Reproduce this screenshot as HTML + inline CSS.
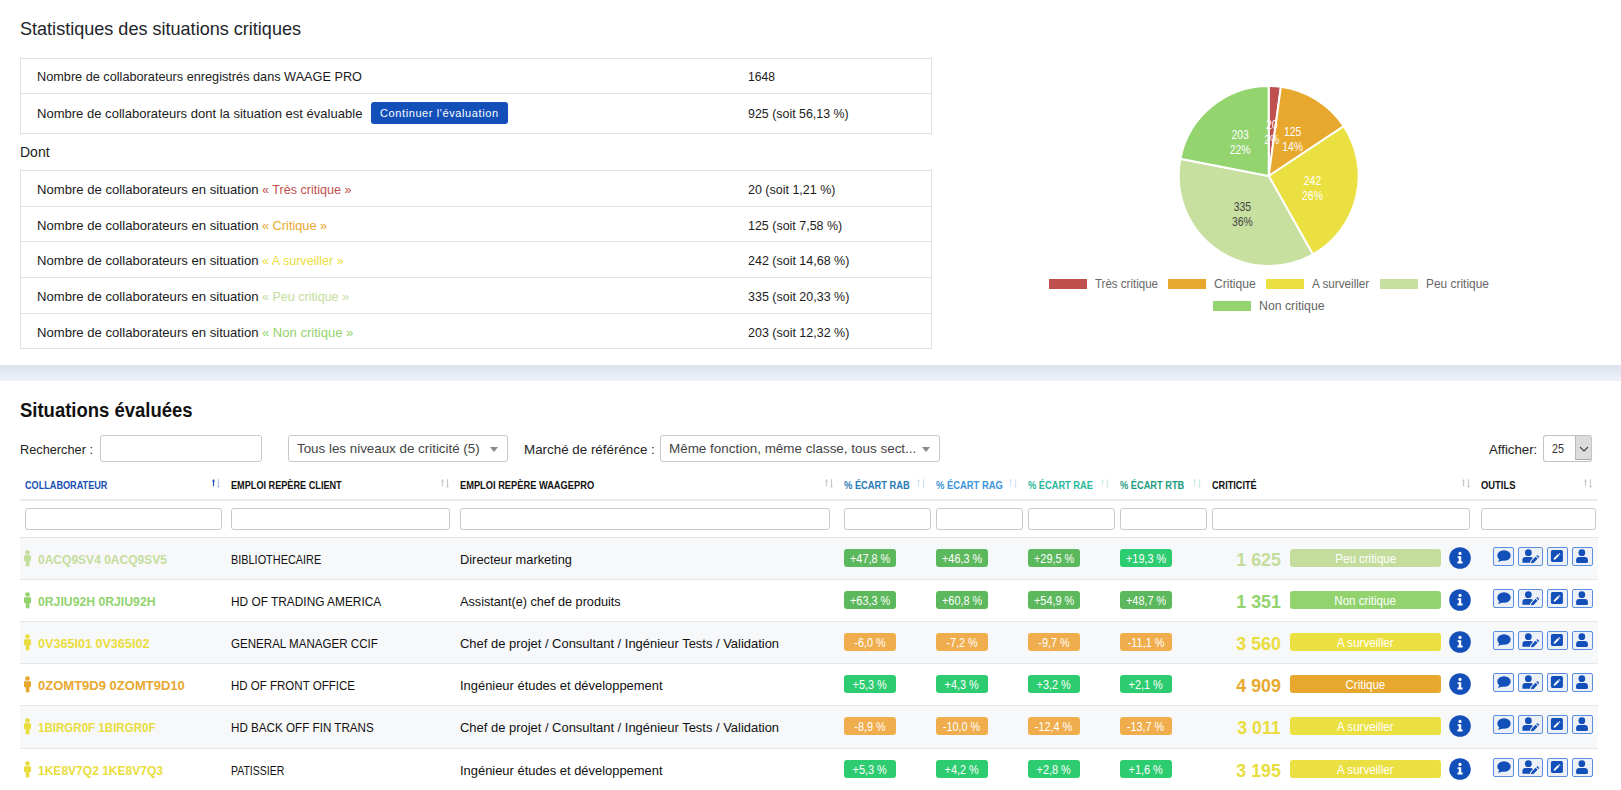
<!DOCTYPE html>
<html><head><meta charset="utf-8">
<style>
*{box-sizing:border-box;margin:0;padding:0}
html,body{width:1621px;height:790px;overflow:hidden;background:#fff}
body{font-family:"Liberation Sans",sans-serif;color:#1b1b1b;font-size:13px;position:relative}
.abs{position:absolute}
.fit{display:inline-block;transform-origin:0 50%;white-space:nowrap}
.h1{left:20px;top:18px;line-height:22px;color:#212529;white-space:nowrap}
.stbl{position:absolute;left:20px;width:912px;border:1px solid #dee2e6;border-bottom:none}
.stbl .r{position:relative;border-bottom:1px solid #dee2e6;white-space:nowrap}
.stbl .l{position:absolute;left:16px;top:1px}
.stbl .v{position:absolute;left:727px;top:1px}
.btn{height:22px;line-height:22px;padding:0 0 0 9px;white-space:nowrap;background:#134fb9;color:#fff;border-radius:3px;font-size:11px;letter-spacing:.6px}
.band{left:0;top:365px;width:1621px;height:16px;background:linear-gradient(#dce1ed,#eef1f8)}
.h2{left:20px;top:399px;line-height:22px;white-space:nowrap;color:#111}
.leg{line-height:10px;color:#666;white-space:nowrap}
.leg .fit{vertical-align:top;line-height:10px;position:relative;top:-0.5px}
.leg i{display:inline-block;width:38px;height:10px;vertical-align:top;margin-right:8px}
.lbl{line-height:18px;color:#222;white-space:nowrap}
.lbl .fit{position:relative;top:0.5px}
.inp{border:1px solid #c9c9c9;border-radius:3px;background:#fff}
.sel{height:27px;border:1px solid #c9c9c9;border-radius:3px;background:#fff;white-space:nowrap;overflow:hidden}
.sel .fit{position:absolute;left:8px;top:4px;line-height:18px;color:#444}
.sel b{position:absolute;right:9px;top:11px;width:0;height:0;border-left:4px solid transparent;border-right:4px solid transparent;border-top:5px solid #888}
.ashow{width:49px;height:26.5px;border:1px solid #c4c4c4;border-radius:3px;background:#fff;overflow:hidden;box-shadow:0 0 1px rgba(0,0,0,.15)}
.ashow span{position:absolute;left:8px;top:4px;font-size:12.4px;line-height:18px;color:#333;display:inline-block;transform:scaleX(.86);transform-origin:0 50%}
.ashow em{position:absolute;left:31px;top:0;width:17px;height:24px;background:#dcdcdc;border-left:1px solid #b8b8b8;border-right:1px solid #999;border-bottom:1px solid #aaa}
.ashow em svg{position:absolute;left:2.5px;top:10px}
table.dt{position:absolute;left:20px;top:470px;width:1578px;border-collapse:separate;border-spacing:0;table-layout:fixed}
.dt th{height:31px;font-size:10px;padding:0 0 0 5px;text-align:left;font-weight:bold;border-bottom:2px solid #ebebeb;white-space:nowrap;position:relative;vertical-align:middle;line-height:29px}
.dt th .fit{position:relative;top:1px;vertical-align:top;line-height:29px}
.dt .si{position:absolute;right:5px;top:9px}
.dt tr.flt td{height:37px;padding:0 0 0 5px;border-bottom:1px solid #e4e4e4;vertical-align:top}
.finp{margin-top:7px;height:22px;border:1px solid #c9c9c9;border-radius:3px;background:#fff}
.dt tr.dr td{padding:13px 0 0 5px;border-bottom:1px solid #e6e7e9;white-space:nowrap;vertical-align:top;line-height:18px;color:#111;overflow:hidden}
.dt tr.dr{height:42px}
.dt tr.odd td{background:#f7f8fa}
.dt tr.even td{background:#fff}
.pers{position:absolute;margin-left:-1px;margin-top:-1.5px}
.nm{margin-left:13px}
.ec{display:inline-block;width:52px;height:18px;line-height:18px;border-radius:3px;color:#fff;text-align:center;margin-top:-2px;vertical-align:top;white-space:nowrap;overflow:hidden}
.ec span{display:inline-block;transform-origin:50% 50%;position:relative;top:1px}
.ec.g{background:#5cb85c}.ec.b{background:#2ecc71}.ec.o{background:#f0ad4e}
.crit{position:relative}
.num{position:absolute;right:195px;top:11px;line-height:22px;font-weight:bold;transform-origin:100% 50%;white-space:nowrap}
.cb{position:absolute;left:83px;top:11px;width:151px;height:18px;line-height:18px;border-radius:3px;color:#fff;text-align:center}
.cb span{display:inline-block;transform-origin:50% 50%;position:relative;top:1px}
.info{position:absolute;left:242px;top:9px}
.tools{display:inline-block;margin-left:12px;margin-top:-4px;vertical-align:top;font-size:0;white-space:nowrap}
.tb{display:inline-block;height:19px;border:1px solid #5b8ee0;border-radius:2px;background:#edf1f7;vertical-align:top;position:relative}
.tb svg{position:absolute;left:0;top:0}
</style></head><body>

<div class="abs h1"><span class="fit" style="font-size:19px;transform:scaleX(0.9503);">Statistiques des situations critiques</span></div>
<div class="stbl" style="top:58px">
<div class="r" style="height:35px;line-height:34px"><span class="l"><span class="fit" style="font-size:13px;transform:scaleX(0.9771);">Nombre de collaborateurs enregistrés dans WAAGE PRO</span></span><span class="v"><span class="fit" style="font-size:13px;transform:scaleX(0.9336);">1648</span></span></div>
<div class="r" style="height:39.5px;line-height:38px"><span class="l"><span class="fit" style="font-size:13px;transform:scaleX(1.0029);">Nombre de collaborateurs dont la situation est évaluable</span></span><span class="v"><span class="fit" style="font-size:13px;transform:scaleX(0.9545);">925 (soit 56,13 %)</span></span></div>
</div>
<div class="abs btn" style="left:371px;top:102px;width:137px">Continuer l'évaluation</div>
<div class="abs" style="left:20px;top:143px;font-size:14px;line-height:18px">Dont</div>
<div class="stbl" style="top:170px">
<div class="r" style="height:36px;line-height:35px"><span class="l"><span class="fit" style="font-size:13px;transform:scaleX(1.0083);">Nombre de collaborateurs en situation</span></span><span class="l" style="left:241px;color:#c0504d"><span class="fit" style="font-size:13px;transform:scaleX(0.9674);">« Très critique »</span></span><span class="v"><span class="fit" style="font-size:13px;transform:scaleX(0.9600);">20 (soit 1,21 %)</span></span></div>
<div class="r" style="height:35px;line-height:35px"><span class="l"><span class="fit" style="font-size:13px;transform:scaleX(1.0083);">Nombre de collaborateurs en situation</span></span><span class="l" style="left:241px;color:#e8a82e"><span class="fit" style="font-size:13px;transform:scaleX(0.9793);">« Critique »</span></span><span class="v"><span class="fit" style="font-size:13px;transform:scaleX(0.9585);">125 (soit 7,58 %)</span></span></div>
<div class="r" style="height:36px;line-height:35px"><span class="l"><span class="fit" style="font-size:13px;transform:scaleX(1.0083);">Nombre de collaborateurs en situation</span></span><span class="l" style="left:241px;color:#e9dd3d"><span class="fit" style="font-size:13px;transform:scaleX(0.9654);">« A surveiller »</span></span><span class="v"><span class="fit" style="font-size:13px;transform:scaleX(0.9601);">242 (soit 14,68 %)</span></span></div>
<div class="r" style="height:36px;line-height:35px"><span class="l"><span class="fit" style="font-size:13px;transform:scaleX(1.0083);">Nombre de collaborateurs en situation</span></span><span class="l" style="left:241px;color:#c5dd9c"><span class="fit" style="font-size:13px;transform:scaleX(0.9631);">« Peu critique »</span></span><span class="v"><span class="fit" style="font-size:13px;transform:scaleX(0.9601);">335 (soit 20,33 %)</span></span></div>
<div class="r" style="height:35px;line-height:35px"><span class="l"><span class="fit" style="font-size:13px;transform:scaleX(1.0083);">Nombre de collaborateurs en situation</span></span><span class="l" style="left:241px;color:#92d36e"><span class="fit" style="font-size:13px;transform:scaleX(1.0027);">« Non critique »</span></span><span class="v"><span class="fit" style="font-size:13px;transform:scaleX(0.9601);">203 (soit 12,32 %)</span></span></div>
</div>
<svg class="abs" style="left:1100px;top:60px" width="300" height="240" viewBox="0 0 300 240">
<g stroke="#fff" stroke-width="2" stroke-linejoin="miter">
<path d="M168.7,116L168.70,26.00A90,90 0 0 1 180.89,26.83Z" fill="#c0504d"/>
<path d="M168.7,116L180.89,26.83A90,90 0 0 1 243.69,66.24Z" fill="#e8a82e"/>
<path d="M168.7,116L243.69,66.24A90,90 0 0 1 212.86,194.42Z" fill="#ebe041"/>
<path d="M168.7,116L212.86,194.42A90,90 0 0 1 80.35,98.84Z" fill="#c7df9f"/>
<path d="M168.7,116L80.35,98.84A90,90 0 0 1 168.70,26.00Z" fill="#93d46f"/>
</g>
<g font-family="Liberation Sans" font-size="12" text-anchor="middle" fill="#fff">
<text transform="translate(171.8 69) scale(.87 1)">20</text><text transform="translate(171.8 84) scale(.87 1)">2%</text>
<text transform="translate(192.6 76) scale(.87 1)">125</text><text transform="translate(192.6 91) scale(.87 1)">14%</text>
<text transform="translate(212.5 124.5) scale(.87 1)">242</text><text transform="translate(212.5 139.5) scale(.87 1)">26%</text>
<text transform="translate(142.4 150.5) scale(.87 1)" fill="#444">335</text><text transform="translate(142.4 165.5) scale(.87 1)" fill="#444">36%</text>
<text transform="translate(140.1 79.3) scale(.87 1)">203</text><text transform="translate(140.1 94.3) scale(.87 1)">22%</text>
</g>
</svg>

<div class="abs leg" style="left:1049px;top:279px"><i style="background:#c0504d"></i><span class="fit" style="font-size:12.6px;transform:scaleX(0.9155);">Très critique</span></div>
<div class="abs leg" style="left:1168px;top:279px"><i style="background:#e8a82e"></i><span class="fit" style="font-size:12.6px;transform:scaleX(0.9632);">Critique</span></div>
<div class="abs leg" style="left:1266px;top:279px"><i style="background:#ebe041"></i><span class="fit" style="font-size:12.6px;transform:scaleX(0.9296);">A surveiller</span></div>
<div class="abs leg" style="left:1380px;top:279px"><i style="background:#c7df9f"></i><span class="fit" style="font-size:12.6px;transform:scaleX(0.9458);">Peu critique</span></div>
<div class="abs leg" style="left:1213px;top:301px"><i style="background:#93d46f"></i><span class="fit" style="font-size:12.6px;transform:scaleX(0.9762);">Non critique</span></div>
<div class="abs band"></div>
<div class="abs h2"><span class="fit" style="font-size:20px;font-weight:bold;transform:scaleX(0.9238);">Situations évaluées</span></div>
<div class="abs lbl" style="left:20px;top:440px"><span class="fit" style="font-size:13.5px;transform:scaleX(0.9446);">Rechercher :</span></div>
<div class="abs inp" style="left:100px;top:435px;width:162px;height:27px"></div>
<div class="abs sel" style="left:288px;top:435px;width:220px"><span class="fit" style="font-size:13.5px;transform:scaleX(0.9898);">Tous les niveaux de criticité (5)</span><b></b></div>
<div class="abs lbl" style="left:524px;top:440px"><span class="fit" style="font-size:13.5px;transform:scaleX(0.9904);">Marché de référénce :</span></div>
<div class="abs sel" style="left:660px;top:435px;width:280px"><span class="fit" style="font-size:13.5px;transform:scaleX(0.9958);">Même fonction, même classe, tous sect...</span><b></b></div>
<div class="abs lbl" style="left:1489px;top:440px"><span class="fit" style="font-size:13.5px;transform:scaleX(0.9782);">Afficher:</span></div>
<div class="abs ashow" style="left:1543px;top:435px"><span>25</span><em><svg width="10" height="6" viewBox="0 0 10 6"><path d="M1 1L5 5L9 1" fill="none" stroke="#444" stroke-width="1.1"/></svg></em></div>
<table class="dt"><colgroup><col style="width:206px"><col style="width:229px"><col style="width:384px"><col style="width:92px"><col style="width:92px"><col style="width:92px"><col style="width:92px"><col style="width:269px"><col style="width:122px"></colgroup>
<tr class="hd"><th style="color:#1a4fb5"><span class="fit" style="font-size:10px;font-weight:bold;transform:scaleX(0.9119);">COLLABORATEUR</span><svg class="si" width="10" height="10" viewBox="0 0 10 10"><path d="M2.5 7.2V0.6" fill="none" stroke="#1a4fb5" stroke-width="1.15"/><path d="M1 2.5L2.5 0.2L4 2.5Z" fill="#1a4fb5"/><path d="M7.5 0.2V8" fill="none" stroke="#b3c7ea" stroke-width="1.15"/><path d="M5.9 7.1L7.5 9.1L9.1 7.1Z" fill="#b3c7ea"/></svg></th><th style="color:#111"><span class="fit" style="font-size:10px;font-weight:bold;transform:scaleX(0.9139);">EMPLOI REPÈRE CLIENT</span><svg class="si" width="10" height="10" viewBox="0 0 10 10"><path d="M2.5 7.2V0.6" fill="none" stroke="#c8c8c8" stroke-width="1.15"/><path d="M1 2.5L2.5 0.2L4 2.5Z" fill="#c8c8c8"/><path d="M7.5 0.2V8" fill="none" stroke="#c8c8c8" stroke-width="1.15"/><path d="M5.9 7.1L7.5 9.1L9.1 7.1Z" fill="#c8c8c8"/></svg></th><th style="color:#111"><span class="fit" style="font-size:10px;font-weight:bold;transform:scaleX(0.9283);">EMPLOI REPÈRE WAAGEPRO</span><svg class="si" width="10" height="10" viewBox="0 0 10 10"><path d="M2.5 7.2V0.6" fill="none" stroke="#c8c8c8" stroke-width="1.15"/><path d="M1 2.5L2.5 0.2L4 2.5Z" fill="#c8c8c8"/><path d="M7.5 0.2V8" fill="none" stroke="#c8c8c8" stroke-width="1.15"/><path d="M5.9 7.1L7.5 9.1L9.1 7.1Z" fill="#c8c8c8"/></svg></th><th style="color:#2a7ab8"><span class="fit" style="font-size:10px;font-weight:bold;transform:scaleX(0.9326);">% ÉCART RAB</span><svg class="si" width="10" height="10" viewBox="0 0 10 10"><path d="M2.5 7.2V0.6" fill="none" stroke="#cfe0ef" stroke-width="1.15"/><path d="M1 2.5L2.5 0.2L4 2.5Z" fill="#cfe0ef"/><path d="M7.5 0.2V8" fill="none" stroke="#cfe0ef" stroke-width="1.15"/><path d="M5.9 7.1L7.5 9.1L9.1 7.1Z" fill="#cfe0ef"/></svg></th><th style="color:#3d94dc"><span class="fit" style="font-size:10px;font-weight:bold;transform:scaleX(0.9393);">% ÉCART RAG</span><svg class="si" width="10" height="10" viewBox="0 0 10 10"><path d="M2.5 7.2V0.6" fill="none" stroke="#d3e5f5" stroke-width="1.15"/><path d="M1 2.5L2.5 0.2L4 2.5Z" fill="#d3e5f5"/><path d="M7.5 0.2V8" fill="none" stroke="#d3e5f5" stroke-width="1.15"/><path d="M5.9 7.1L7.5 9.1L9.1 7.1Z" fill="#d3e5f5"/></svg></th><th style="color:#26b799"><span class="fit" style="font-size:10px;font-weight:bold;transform:scaleX(0.9271);">% ÉCART RAE</span><svg class="si" width="10" height="10" viewBox="0 0 10 10"><path d="M2.5 7.2V0.6" fill="none" stroke="#cdeee6" stroke-width="1.15"/><path d="M1 2.5L2.5 0.2L4 2.5Z" fill="#cdeee6"/><path d="M7.5 0.2V8" fill="none" stroke="#cdeee6" stroke-width="1.15"/><path d="M5.9 7.1L7.5 9.1L9.1 7.1Z" fill="#cdeee6"/></svg></th><th style="color:#1c9b82"><span class="fit" style="font-size:10px;font-weight:bold;transform:scaleX(0.9245);">% ÉCART RTB</span><svg class="si" width="10" height="10" viewBox="0 0 10 10"><path d="M2.5 7.2V0.6" fill="none" stroke="#cdeee6" stroke-width="1.15"/><path d="M1 2.5L2.5 0.2L4 2.5Z" fill="#cdeee6"/><path d="M7.5 0.2V8" fill="none" stroke="#cdeee6" stroke-width="1.15"/><path d="M5.9 7.1L7.5 9.1L9.1 7.1Z" fill="#cdeee6"/></svg></th><th style="color:#111"><span class="fit" style="font-size:10px;font-weight:bold;transform:scaleX(0.9144);">CRITICITÉ</span><svg class="si" width="10" height="10" viewBox="0 0 10 10"><path d="M2.5 7.2V0.6" fill="none" stroke="#c8c8c8" stroke-width="1.15"/><path d="M1 2.5L2.5 0.2L4 2.5Z" fill="#c8c8c8"/><path d="M7.5 0.2V8" fill="none" stroke="#c8c8c8" stroke-width="1.15"/><path d="M5.9 7.1L7.5 9.1L9.1 7.1Z" fill="#c8c8c8"/></svg></th><th style="color:#111"><span class="fit" style="font-size:10px;font-weight:bold;transform:scaleX(0.9382);">OUTILS</span><svg class="si" width="10" height="10" viewBox="0 0 10 10"><path d="M2.5 7.2V0.6" fill="none" stroke="#c8c8c8" stroke-width="1.15"/><path d="M1 2.5L2.5 0.2L4 2.5Z" fill="#c8c8c8"/><path d="M7.5 0.2V8" fill="none" stroke="#c8c8c8" stroke-width="1.15"/><path d="M5.9 7.1L7.5 9.1L9.1 7.1Z" fill="#c8c8c8"/></svg></th></tr>
<tr class="flt"><td><div class="finp" style="width:197px"></div></td><td><div class="finp" style="width:219px"></div></td><td><div class="finp" style="width:370px"></div></td><td><div class="finp" style="width:87px"></div></td><td><div class="finp" style="width:87px"></div></td><td><div class="finp" style="width:87px"></div></td><td><div class="finp" style="width:87px"></div></td><td><div class="finp" style="width:258px"></div></td><td><div class="finp" style="width:115px"></div></td></tr>
<tr class="dr odd"><td><svg class="pers" width="8" height="17" viewBox="0 0 8 17"><circle cx="3.5" cy="2.5" r="2.35" fill="#c5dd9c"/><rect x="0" y="5.2" width="7" height="6" rx="0.9" fill="#c5dd9c"/><rect x="1.8" y="10.5" width="3.6" height="5.8" fill="#c5dd9c"/></svg><span class="fit nm" style="font-size:13px;font-weight:bold;transform:scaleX(0.9251);color:#c5dd9c">0ACQ9SV4 0ACQ9SV5</span></td><td><span class="fit" style="font-size:13px;transform:scaleX(0.8380);">BIBLIOTHECAIRE</span></td><td><span class="fit" style="font-size:13px;transform:scaleX(0.9865);">Directeur marketing</span></td><td><span class="ec g"><span style="font-size:12.5px;transform:scaleX(0.87)">+47,8 %</span></span></td><td><span class="ec g"><span style="font-size:12.5px;transform:scaleX(0.87)">+46,3 %</span></span></td><td><span class="ec g"><span style="font-size:12.5px;transform:scaleX(0.87)">+29,5 %</span></span></td><td><span class="ec b"><span style="font-size:12.5px;transform:scaleX(0.87)">+19,3 %</span></span></td><td class="crit"><b class="num" style="color:#c5dd9c;font-size:18.7px;transform:scaleX(0.95)">1 625</b><span class="cb" style="background:#c5dd9c"><span style="font-size:12.4px;transform:scaleX(0.93)">Peu critique</span></span><svg class="info" width="22" height="22" viewBox="0 0 22 22"><circle cx="11" cy="11" r="10.8" fill="#134fb9"/><circle cx="11" cy="6.4" r="1.6" fill="#fff"/><path d="M8.6 9.2H12.2V14.6H13.6V16.4H8.5V14.6H9.8V11H8.6Z" fill="#fff"/></svg></td><td><span class="tools"><i class="tb" style="width:21px"><svg width="19" height="17" viewBox="0 0 19 17"><ellipse cx="10" cy="7.55" rx="6.7" ry="5.3" fill="#134fb9"/><path d="M5.6 10.4L4 14L9 12.3Z" fill="#134fb9"/></svg></i><i class="tb" style="width:25px;margin-left:4px"><svg width="23" height="17" viewBox="0 0 23 17"><circle cx="9.35" cy="4.7" r="3.4" fill="#134fb9"/><path d="M3.4 14.8V12Q3.4 9 6.4 9H11.4Q13.1 9 14 10.1L11.4 12.7L11 14.8Z" fill="#134fb9"/><path d="M12 15.2L12.5 12.9L16.6 8.8L18.6 10.8L14.5 14.9Z" fill="#134fb9"/><path d="M17.3 8.1L18.3 7.1L20.3 9.1L19.3 10.1Z" fill="#134fb9"/></svg></i><i class="tb" style="width:21px;margin-left:4px"><svg width="19" height="17" viewBox="0 0 19 17"><rect x="2.9" y="2.1" width="12" height="11.8" rx="1.6" fill="#134fb9"/><path d="M5.6 11.1Q5.7 10.3 6.3 9.7L9.9 6.1L11.3 7.5L7.7 11.1Q7.1 11.7 6.3 11.8Q5.5 11.8 5.6 11.1Z" fill="#fff"/><path d="M10.5 5.5L11.1 4.9L12.5 6.3L11.9 6.9Z" fill="#fff"/></svg></i><i class="tb" style="width:21px;margin-left:4px"><svg width="19" height="17" viewBox="0 0 19 17"><circle cx="8.85" cy="4.65" r="3.35" fill="#134fb9"/><path d="M3.1 13.4V12.2Q3.1 9 6.3 9H11.7Q14.9 9 14.9 12.2V13.4Q14.9 14.9 13.4 14.9H4.6Q3.1 14.9 3.1 13.4Z" fill="#134fb9"/></svg></i></span></td></tr>
<tr class="dr even"><td><svg class="pers" width="8" height="17" viewBox="0 0 8 17"><circle cx="3.5" cy="2.5" r="2.35" fill="#92d36e"/><rect x="0" y="5.2" width="7" height="6" rx="0.9" fill="#92d36e"/><rect x="1.8" y="10.5" width="3.6" height="5.8" fill="#92d36e"/></svg><span class="fit nm" style="font-size:13px;font-weight:bold;transform:scaleX(0.9400);color:#92d36e">0RJIU92H 0RJIU92H</span></td><td><span class="fit" style="font-size:13px;transform:scaleX(0.9136);">HD OF TRADING AMERICA</span></td><td><span class="fit" style="font-size:13px;transform:scaleX(0.9754);">Assistant(e) chef de produits</span></td><td><span class="ec g"><span style="font-size:12.5px;transform:scaleX(0.87)">+63,3 %</span></span></td><td><span class="ec g"><span style="font-size:12.5px;transform:scaleX(0.87)">+60,8 %</span></span></td><td><span class="ec g"><span style="font-size:12.5px;transform:scaleX(0.87)">+54,9 %</span></span></td><td><span class="ec g"><span style="font-size:12.5px;transform:scaleX(0.87)">+48,7 %</span></span></td><td class="crit"><b class="num" style="color:#92d36e;font-size:18.7px;transform:scaleX(0.95)">1 351</b><span class="cb" style="background:#92d36e"><span style="font-size:12.4px;transform:scaleX(0.93)">Non critique</span></span><svg class="info" width="22" height="22" viewBox="0 0 22 22"><circle cx="11" cy="11" r="10.8" fill="#134fb9"/><circle cx="11" cy="6.4" r="1.6" fill="#fff"/><path d="M8.6 9.2H12.2V14.6H13.6V16.4H8.5V14.6H9.8V11H8.6Z" fill="#fff"/></svg></td><td><span class="tools"><i class="tb" style="width:21px"><svg width="19" height="17" viewBox="0 0 19 17"><ellipse cx="10" cy="7.55" rx="6.7" ry="5.3" fill="#134fb9"/><path d="M5.6 10.4L4 14L9 12.3Z" fill="#134fb9"/></svg></i><i class="tb" style="width:25px;margin-left:4px"><svg width="23" height="17" viewBox="0 0 23 17"><circle cx="9.35" cy="4.7" r="3.4" fill="#134fb9"/><path d="M3.4 14.8V12Q3.4 9 6.4 9H11.4Q13.1 9 14 10.1L11.4 12.7L11 14.8Z" fill="#134fb9"/><path d="M12 15.2L12.5 12.9L16.6 8.8L18.6 10.8L14.5 14.9Z" fill="#134fb9"/><path d="M17.3 8.1L18.3 7.1L20.3 9.1L19.3 10.1Z" fill="#134fb9"/></svg></i><i class="tb" style="width:21px;margin-left:4px"><svg width="19" height="17" viewBox="0 0 19 17"><rect x="2.9" y="2.1" width="12" height="11.8" rx="1.6" fill="#134fb9"/><path d="M5.6 11.1Q5.7 10.3 6.3 9.7L9.9 6.1L11.3 7.5L7.7 11.1Q7.1 11.7 6.3 11.8Q5.5 11.8 5.6 11.1Z" fill="#fff"/><path d="M10.5 5.5L11.1 4.9L12.5 6.3L11.9 6.9Z" fill="#fff"/></svg></i><i class="tb" style="width:21px;margin-left:4px"><svg width="19" height="17" viewBox="0 0 19 17"><circle cx="8.85" cy="4.65" r="3.35" fill="#134fb9"/><path d="M3.1 13.4V12.2Q3.1 9 6.3 9H11.7Q14.9 9 14.9 12.2V13.4Q14.9 14.9 13.4 14.9H4.6Q3.1 14.9 3.1 13.4Z" fill="#134fb9"/></svg></i></span></td></tr>
<tr class="dr odd"><td><svg class="pers" width="8" height="17" viewBox="0 0 8 17"><circle cx="3.5" cy="2.5" r="2.35" fill="#e9dd3d"/><rect x="0" y="5.2" width="7" height="6" rx="0.9" fill="#e9dd3d"/><rect x="1.8" y="10.5" width="3.6" height="5.8" fill="#e9dd3d"/></svg><span class="fit nm" style="font-size:13px;font-weight:bold;transform:scaleX(0.9692);color:#e9dd3d">0V365I01 0V365I02</span></td><td><span class="fit" style="font-size:13px;transform:scaleX(0.8899);">GENERAL MANAGER CCIF</span></td><td><span class="fit" style="font-size:13px;transform:scaleX(0.9959);">Chef de projet / Consultant / Ingénieur Tests / Validation</span></td><td><span class="ec o"><span style="font-size:12.5px;transform:scaleX(0.87)">-6,0 %</span></span></td><td><span class="ec o"><span style="font-size:12.5px;transform:scaleX(0.87)">-7,2 %</span></span></td><td><span class="ec o"><span style="font-size:12.5px;transform:scaleX(0.87)">-9,7 %</span></span></td><td><span class="ec o"><span style="font-size:12.5px;transform:scaleX(0.87)">-11,1 %</span></span></td><td class="crit"><b class="num" style="color:#e9dd3d;font-size:18.7px;transform:scaleX(0.95)">3 560</b><span class="cb" style="background:#ebe041"><span style="font-size:12.4px;transform:scaleX(0.93)">A surveiller</span></span><svg class="info" width="22" height="22" viewBox="0 0 22 22"><circle cx="11" cy="11" r="10.8" fill="#134fb9"/><circle cx="11" cy="6.4" r="1.6" fill="#fff"/><path d="M8.6 9.2H12.2V14.6H13.6V16.4H8.5V14.6H9.8V11H8.6Z" fill="#fff"/></svg></td><td><span class="tools"><i class="tb" style="width:21px"><svg width="19" height="17" viewBox="0 0 19 17"><ellipse cx="10" cy="7.55" rx="6.7" ry="5.3" fill="#134fb9"/><path d="M5.6 10.4L4 14L9 12.3Z" fill="#134fb9"/></svg></i><i class="tb" style="width:25px;margin-left:4px"><svg width="23" height="17" viewBox="0 0 23 17"><circle cx="9.35" cy="4.7" r="3.4" fill="#134fb9"/><path d="M3.4 14.8V12Q3.4 9 6.4 9H11.4Q13.1 9 14 10.1L11.4 12.7L11 14.8Z" fill="#134fb9"/><path d="M12 15.2L12.5 12.9L16.6 8.8L18.6 10.8L14.5 14.9Z" fill="#134fb9"/><path d="M17.3 8.1L18.3 7.1L20.3 9.1L19.3 10.1Z" fill="#134fb9"/></svg></i><i class="tb" style="width:21px;margin-left:4px"><svg width="19" height="17" viewBox="0 0 19 17"><rect x="2.9" y="2.1" width="12" height="11.8" rx="1.6" fill="#134fb9"/><path d="M5.6 11.1Q5.7 10.3 6.3 9.7L9.9 6.1L11.3 7.5L7.7 11.1Q7.1 11.7 6.3 11.8Q5.5 11.8 5.6 11.1Z" fill="#fff"/><path d="M10.5 5.5L11.1 4.9L12.5 6.3L11.9 6.9Z" fill="#fff"/></svg></i><i class="tb" style="width:21px;margin-left:4px"><svg width="19" height="17" viewBox="0 0 19 17"><circle cx="8.85" cy="4.65" r="3.35" fill="#134fb9"/><path d="M3.1 13.4V12.2Q3.1 9 6.3 9H11.7Q14.9 9 14.9 12.2V13.4Q14.9 14.9 13.4 14.9H4.6Q3.1 14.9 3.1 13.4Z" fill="#134fb9"/></svg></i></span></td></tr>
<tr class="dr even"><td><svg class="pers" width="8" height="17" viewBox="0 0 8 17"><circle cx="3.5" cy="2.5" r="2.35" fill="#e8a82e"/><rect x="0" y="5.2" width="7" height="6" rx="0.9" fill="#e8a82e"/><rect x="1.8" y="10.5" width="3.6" height="5.8" fill="#e8a82e"/></svg><span class="fit nm" style="font-size:13px;font-weight:bold;transform:scaleX(1.0011);color:#e8a82e">0ZOMT9D9 0ZOMT9D10</span></td><td><span class="fit" style="font-size:13px;transform:scaleX(0.8858);">HD OF FRONT OFFICE</span></td><td><span class="fit" style="font-size:13px;transform:scaleX(0.9935);">Ingénieur études et développement</span></td><td><span class="ec b"><span style="font-size:12.5px;transform:scaleX(0.87)">+5,3 %</span></span></td><td><span class="ec b"><span style="font-size:12.5px;transform:scaleX(0.87)">+4,3 %</span></span></td><td><span class="ec b"><span style="font-size:12.5px;transform:scaleX(0.87)">+3,2 %</span></span></td><td><span class="ec b"><span style="font-size:12.5px;transform:scaleX(0.87)">+2,1 %</span></span></td><td class="crit"><b class="num" style="color:#e8a82e;font-size:18.7px;transform:scaleX(0.95)">4 909</b><span class="cb" style="background:#e8a82e"><span style="font-size:12.4px;transform:scaleX(0.93)">Critique</span></span><svg class="info" width="22" height="22" viewBox="0 0 22 22"><circle cx="11" cy="11" r="10.8" fill="#134fb9"/><circle cx="11" cy="6.4" r="1.6" fill="#fff"/><path d="M8.6 9.2H12.2V14.6H13.6V16.4H8.5V14.6H9.8V11H8.6Z" fill="#fff"/></svg></td><td><span class="tools"><i class="tb" style="width:21px"><svg width="19" height="17" viewBox="0 0 19 17"><ellipse cx="10" cy="7.55" rx="6.7" ry="5.3" fill="#134fb9"/><path d="M5.6 10.4L4 14L9 12.3Z" fill="#134fb9"/></svg></i><i class="tb" style="width:25px;margin-left:4px"><svg width="23" height="17" viewBox="0 0 23 17"><circle cx="9.35" cy="4.7" r="3.4" fill="#134fb9"/><path d="M3.4 14.8V12Q3.4 9 6.4 9H11.4Q13.1 9 14 10.1L11.4 12.7L11 14.8Z" fill="#134fb9"/><path d="M12 15.2L12.5 12.9L16.6 8.8L18.6 10.8L14.5 14.9Z" fill="#134fb9"/><path d="M17.3 8.1L18.3 7.1L20.3 9.1L19.3 10.1Z" fill="#134fb9"/></svg></i><i class="tb" style="width:21px;margin-left:4px"><svg width="19" height="17" viewBox="0 0 19 17"><rect x="2.9" y="2.1" width="12" height="11.8" rx="1.6" fill="#134fb9"/><path d="M5.6 11.1Q5.7 10.3 6.3 9.7L9.9 6.1L11.3 7.5L7.7 11.1Q7.1 11.7 6.3 11.8Q5.5 11.8 5.6 11.1Z" fill="#fff"/><path d="M10.5 5.5L11.1 4.9L12.5 6.3L11.9 6.9Z" fill="#fff"/></svg></i><i class="tb" style="width:21px;margin-left:4px"><svg width="19" height="17" viewBox="0 0 19 17"><circle cx="8.85" cy="4.65" r="3.35" fill="#134fb9"/><path d="M3.1 13.4V12.2Q3.1 9 6.3 9H11.7Q14.9 9 14.9 12.2V13.4Q14.9 14.9 13.4 14.9H4.6Q3.1 14.9 3.1 13.4Z" fill="#134fb9"/></svg></i></span></td></tr>
<tr class="dr odd" style="height:43px"><td><svg class="pers" width="8" height="17" viewBox="0 0 8 17"><circle cx="3.5" cy="2.5" r="2.35" fill="#e9dd3d"/><rect x="0" y="5.2" width="7" height="6" rx="0.9" fill="#e9dd3d"/><rect x="1.8" y="10.5" width="3.6" height="5.8" fill="#e9dd3d"/></svg><span class="fit nm" style="font-size:13px;font-weight:bold;transform:scaleX(0.8889);color:#e9dd3d">1BIRGR0F 1BIRGR0F</span></td><td><span class="fit" style="font-size:13px;transform:scaleX(0.8959);">HD BACK OFF FIN TRANS</span></td><td><span class="fit" style="font-size:13px;transform:scaleX(0.9959);">Chef de projet / Consultant / Ingénieur Tests / Validation</span></td><td><span class="ec o"><span style="font-size:12.5px;transform:scaleX(0.87)">-8,9 %</span></span></td><td><span class="ec o"><span style="font-size:12.5px;transform:scaleX(0.87)">-10,0 %</span></span></td><td><span class="ec o"><span style="font-size:12.5px;transform:scaleX(0.87)">-12,4 %</span></span></td><td><span class="ec o"><span style="font-size:12.5px;transform:scaleX(0.87)">-13,7 %</span></span></td><td class="crit"><b class="num" style="color:#e9dd3d;font-size:18.7px;transform:scaleX(0.95)">3 011</b><span class="cb" style="background:#ebe041"><span style="font-size:12.4px;transform:scaleX(0.93)">A surveiller</span></span><svg class="info" width="22" height="22" viewBox="0 0 22 22"><circle cx="11" cy="11" r="10.8" fill="#134fb9"/><circle cx="11" cy="6.4" r="1.6" fill="#fff"/><path d="M8.6 9.2H12.2V14.6H13.6V16.4H8.5V14.6H9.8V11H8.6Z" fill="#fff"/></svg></td><td><span class="tools"><i class="tb" style="width:21px"><svg width="19" height="17" viewBox="0 0 19 17"><ellipse cx="10" cy="7.55" rx="6.7" ry="5.3" fill="#134fb9"/><path d="M5.6 10.4L4 14L9 12.3Z" fill="#134fb9"/></svg></i><i class="tb" style="width:25px;margin-left:4px"><svg width="23" height="17" viewBox="0 0 23 17"><circle cx="9.35" cy="4.7" r="3.4" fill="#134fb9"/><path d="M3.4 14.8V12Q3.4 9 6.4 9H11.4Q13.1 9 14 10.1L11.4 12.7L11 14.8Z" fill="#134fb9"/><path d="M12 15.2L12.5 12.9L16.6 8.8L18.6 10.8L14.5 14.9Z" fill="#134fb9"/><path d="M17.3 8.1L18.3 7.1L20.3 9.1L19.3 10.1Z" fill="#134fb9"/></svg></i><i class="tb" style="width:21px;margin-left:4px"><svg width="19" height="17" viewBox="0 0 19 17"><rect x="2.9" y="2.1" width="12" height="11.8" rx="1.6" fill="#134fb9"/><path d="M5.6 11.1Q5.7 10.3 6.3 9.7L9.9 6.1L11.3 7.5L7.7 11.1Q7.1 11.7 6.3 11.8Q5.5 11.8 5.6 11.1Z" fill="#fff"/><path d="M10.5 5.5L11.1 4.9L12.5 6.3L11.9 6.9Z" fill="#fff"/></svg></i><i class="tb" style="width:21px;margin-left:4px"><svg width="19" height="17" viewBox="0 0 19 17"><circle cx="8.85" cy="4.65" r="3.35" fill="#134fb9"/><path d="M3.1 13.4V12.2Q3.1 9 6.3 9H11.7Q14.9 9 14.9 12.2V13.4Q14.9 14.9 13.4 14.9H4.6Q3.1 14.9 3.1 13.4Z" fill="#134fb9"/></svg></i></span></td></tr>
<tr class="dr even"><td><svg class="pers" width="8" height="17" viewBox="0 0 8 17"><circle cx="3.5" cy="2.5" r="2.35" fill="#e9dd3d"/><rect x="0" y="5.2" width="7" height="6" rx="0.9" fill="#e9dd3d"/><rect x="1.8" y="10.5" width="3.6" height="5.8" fill="#e9dd3d"/></svg><span class="fit nm" style="font-size:13px;font-weight:bold;transform:scaleX(0.9250);color:#e9dd3d">1KE8V7Q2 1KE8V7Q3</span></td><td><span class="fit" style="font-size:13px;transform:scaleX(0.8079);">PATISSIER</span></td><td><span class="fit" style="font-size:13px;transform:scaleX(0.9935);">Ingénieur études et développement</span></td><td><span class="ec b"><span style="font-size:12.5px;transform:scaleX(0.87)">+5,3 %</span></span></td><td><span class="ec b"><span style="font-size:12.5px;transform:scaleX(0.87)">+4,2 %</span></span></td><td><span class="ec b"><span style="font-size:12.5px;transform:scaleX(0.87)">+2,8 %</span></span></td><td><span class="ec b"><span style="font-size:12.5px;transform:scaleX(0.87)">+1,6 %</span></span></td><td class="crit"><b class="num" style="color:#e9dd3d;font-size:18.7px;transform:scaleX(0.95)">3 195</b><span class="cb" style="background:#ebe041"><span style="font-size:12.4px;transform:scaleX(0.93)">A surveiller</span></span><svg class="info" width="22" height="22" viewBox="0 0 22 22"><circle cx="11" cy="11" r="10.8" fill="#134fb9"/><circle cx="11" cy="6.4" r="1.6" fill="#fff"/><path d="M8.6 9.2H12.2V14.6H13.6V16.4H8.5V14.6H9.8V11H8.6Z" fill="#fff"/></svg></td><td><span class="tools"><i class="tb" style="width:21px"><svg width="19" height="17" viewBox="0 0 19 17"><ellipse cx="10" cy="7.55" rx="6.7" ry="5.3" fill="#134fb9"/><path d="M5.6 10.4L4 14L9 12.3Z" fill="#134fb9"/></svg></i><i class="tb" style="width:25px;margin-left:4px"><svg width="23" height="17" viewBox="0 0 23 17"><circle cx="9.35" cy="4.7" r="3.4" fill="#134fb9"/><path d="M3.4 14.8V12Q3.4 9 6.4 9H11.4Q13.1 9 14 10.1L11.4 12.7L11 14.8Z" fill="#134fb9"/><path d="M12 15.2L12.5 12.9L16.6 8.8L18.6 10.8L14.5 14.9Z" fill="#134fb9"/><path d="M17.3 8.1L18.3 7.1L20.3 9.1L19.3 10.1Z" fill="#134fb9"/></svg></i><i class="tb" style="width:21px;margin-left:4px"><svg width="19" height="17" viewBox="0 0 19 17"><rect x="2.9" y="2.1" width="12" height="11.8" rx="1.6" fill="#134fb9"/><path d="M5.6 11.1Q5.7 10.3 6.3 9.7L9.9 6.1L11.3 7.5L7.7 11.1Q7.1 11.7 6.3 11.8Q5.5 11.8 5.6 11.1Z" fill="#fff"/><path d="M10.5 5.5L11.1 4.9L12.5 6.3L11.9 6.9Z" fill="#fff"/></svg></i><i class="tb" style="width:21px;margin-left:4px"><svg width="19" height="17" viewBox="0 0 19 17"><circle cx="8.85" cy="4.65" r="3.35" fill="#134fb9"/><path d="M3.1 13.4V12.2Q3.1 9 6.3 9H11.7Q14.9 9 14.9 12.2V13.4Q14.9 14.9 13.4 14.9H4.6Q3.1 14.9 3.1 13.4Z" fill="#134fb9"/></svg></i></span></td></tr>
</table>
</body></html>
